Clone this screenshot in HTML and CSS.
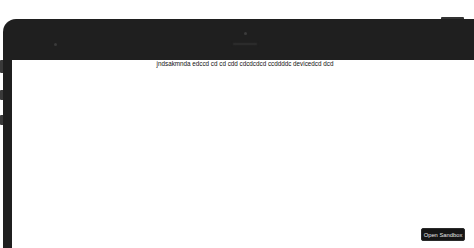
FILE: index.html
```html
<!DOCTYPE html>
<html>
<head>
<meta charset="utf-8">
<link rel="stylesheet" href="styles.css">
</head>
<body>
<div class="device">
  <span class="side-btn btn-a"></span>
  <span class="side-btn btn-b"></span>
  <span class="side-btn btn-c"></span>
  <span class="top-btn"></span>
  <div class="bezel">
    <span class="cam-side"></span>
    <div class="center-bits">
      <span class="cam"></span>
      <span class="speaker"></span>
    </div>
  </div>
  <div class="screen">
    <p class="msg">jndsakmnda edccd cd cd cdd cdcdcdcd ccddddc devicedcd dcd</p>
  </div>
</div>
<a class="open-sandbox">Open Sandbox</a>
</body>
</html>
```

FILE: styles.css
```css
html, body {
  margin: 0;
  padding: 0;
  background: #ffffff;
  overflow: hidden;
}
body {
  height: 248px;
  box-sizing: border-box;
  padding: 19px 0 0 3px;
  font-family: "Liberation Sans", Arial, sans-serif;
}
.device {
  position: relative;
  width: 484px;
  height: 229px;
  background: #1f1f1f;
  border-radius: 13px 13px 0 0;
  padding: 0 9px;
  box-sizing: border-box;
  display: flex;
  flex-direction: column;
}
.bezel {
  height: 41px;
  flex: none;
  position: relative;
  display: flex;
  justify-content: center;
}
.cam-side {
  position: absolute;
  left: 42px;
  top: 24px;
  width: 3px;
  height: 3px;
  border-radius: 50%;
  background: #3a3a3a;
}
.center-bits {
  display: flex;
  flex-direction: column;
  align-items: center;
  padding-top: 13px;
  gap: 8px;
}
.cam {
  width: 3px;
  height: 3px;
  border-radius: 50%;
  background: #3c3c3c;
}
.speaker {
  width: 24px;
  height: 2px;
  border-radius: 1px;
  background: #2b2b2b;
  box-shadow: 0 0 2px #2b2b2b;
}
.screen {
  flex: 1;
  background: #ffffff;
}
.msg {
  margin: 0;
  font-size: 6.3px;
  line-height: 8px;
  color: #111;
  text-align: center;
}
.side-btn {
  position: absolute;
  left: -3px;
  width: 3px;
  background: #3a3a3a;
  border-radius: 1px 0 0 1px;
}
.btn-a { top: 41px; height: 13px; }
.btn-b { top: 71px; height: 10px; }
.btn-c { top: 96px; height: 10px; }
.top-btn {
  position: absolute;
  top: -2px;
  left: 438px;
  width: 23px;
  height: 2px;
  background: #333;
  border-radius: 1px 1px 0 0;
}
.open-sandbox {
  position: fixed;
  right: 9px;
  bottom: 7px;
  height: 13px;
  width: 44px;
  box-sizing: border-box;
  display: flex;
  align-items: center;
  justify-content: center;
  background: #151515;
  color: #e8e8e8;
  font-size: 5.8px;
  white-space: nowrap;
  border-radius: 2px;
  border: 1px solid #2a2a2a;
}
```
